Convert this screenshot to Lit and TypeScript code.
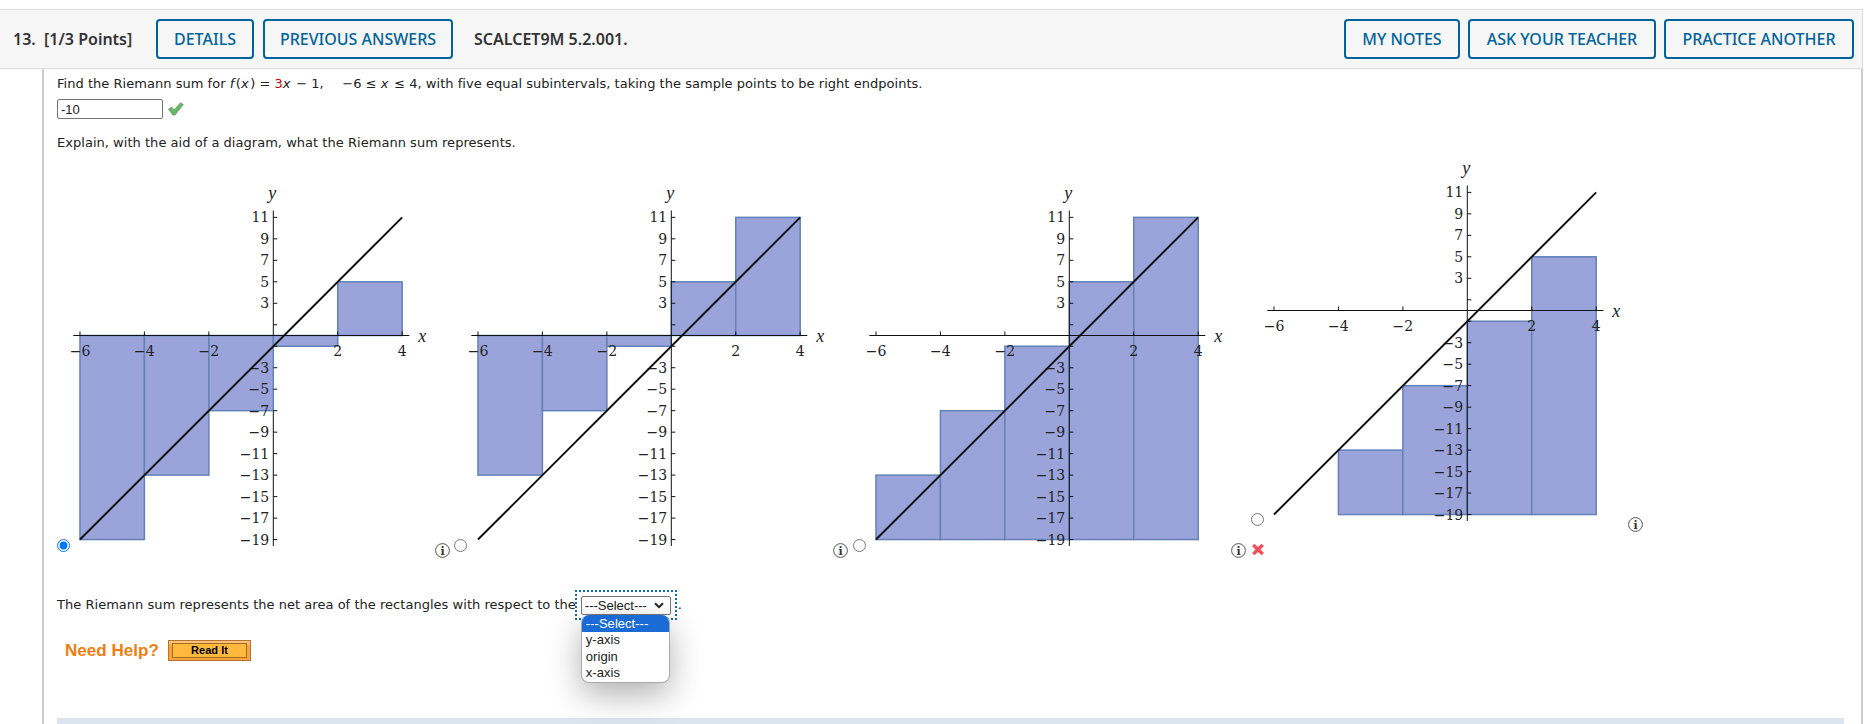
import { LitElement, css, html, svg } from "lit";
import { customElement } from "lit/decorators.js";

const X0 = 203.3;
const Y0 = 150.5;
const XU = 32.22;
const YU = 10.74;

const px = (x: number) => X0 + x * XU;
const py = (y: number) => Y0 - y * YU;

// [from x, y bottom, y top] of each rectangle, every one 2 wide
type Bar = [number, number, number];

const GRAPHS: { cls: string; bars: Bar[]; under?: boolean }[] = [
  {
    cls: "g1",
    under: true,
    bars: [
      [-6, -19, 0],
      [-4, -13, 0],
      [-2, -7, 0],
      [0, -1, 0],
      [2, 0, 5],
    ],
  },
  {
    cls: "g2",
    bars: [
      [-6, -13, 0],
      [-4, -7, 0],
      [-2, -1, 0],
      [0, 0, 5],
      [2, 0, 11],
    ],
  },
  {
    cls: "g3",
    bars: [
      [-6, -19, -13],
      [-4, -19, -7],
      [-2, -19, -1],
      [0, -19, 5],
      [2, -19, 11],
    ],
  },
  {
    cls: "g4",
    bars: [
      [-4, -19, -13],
      [-2, -19, -7],
      [0, -19, -1],
      [2, -19, 5],
    ],
  },
];

const label = (n: number) => (n < 0 ? `\u2212${-n}` : `${n}`);

@customElement("riemann-graph")
export class RiemannGraph extends LitElement {
  static override properties = { bars: { attribute: false }, under: { type: Boolean } };
  bars: Bar[] = [];
  under = false;

  static override styles = css`
    :host {
      display: block;
      width: 345px;
      height: 365px;
    }
    svg {
      display: block;
      overflow: visible;
    }
    text {
      font-family: "DejaVu Serif", serif;
      font-size: 14px;
      fill: #222;
    }
    .name {
      font-family: "Liberation Serif", serif;
      font-style: italic;
      font-size: 18px;
    }
    .bar {
      fill: #9aa3da;
      stroke: #6282b8;
      stroke-width: 1.5;
    }
    .axis {
      stroke: #111;
      stroke-width: 1;
    }
    .curve {
      stroke: #111;
      stroke-width: 2;
    }
  `;

  override render() {
    const yAxis = svg`<line class="axis" x1=${X0} x2=${X0} y1=${Y0 - 125} y2=${Y0 + 210.5}></line>`;
    const yVals = [11, 9, 7, 5, 3, 1, -1, -3, -5, -7, -9, -11, -13, -15, -17, -19];
    return html`
      <svg width="345" height="365" viewBox="0 0 345 365">
        ${this.under ? yAxis : ""}
        ${this.bars.map(
          ([x, lo, hi]) => svg`<rect class="bar" x=${px(x)} y=${py(hi)} width=${2 * XU} height=${(hi - lo) * YU}></rect>`
        )}
        ${this.under ? "" : yAxis}
        <line class="axis" x1=${X0 - 200} x2=${X0 + 136} y1=${Y0} y2=${Y0}></line>
        ${[-6, -4, -2, 2, 4].map(
          (x) => svg`
            <line class="axis" x1=${px(x)} x2=${px(x)} y1=${Y0 - 4} y2=${Y0}></line>
            <text x=${px(x)} y=${Y0 + 20} text-anchor="middle">${label(x)}</text>
          `
        )}
        ${yVals.map(
          (y) => svg`
            <line class="axis" x1=${X0} x2=${X0 + 4} y1=${py(y)} y2=${py(y)}></line>
            ${y === 1 || y === -1
              ? ""
              : svg`<text x=${X0 - 4} y=${py(y) + 5} text-anchor="end">${label(y)}</text>`}
          `
        )}
        <line class="curve" x1=${px(-6)} y1=${py(-19)} x2=${px(4)} y2=${py(11)}></line>
        <text class="name" x=${X0 + 145} y=${Y0 + 6}>x</text>
        <text class="name" x=${X0 - 5} y=${Y0 - 137}>y</text>
      </svg>
    `;
  }
}

const info = (cls: string) => html`
  <svg class="info ${cls}" width="15" height="15" viewBox="0 0 15 15">
    <circle cx="7.5" cy="7.5" r="6.9" fill="#fff" stroke="#555" stroke-width="1"></circle>
    <text x="7.5" y="11.7" text-anchor="middle" font-family="DejaVu Serif" font-weight="700" font-size="11" fill="#333">i</text>
  </svg>
`;

@customElement("app-root")
export class AppRoot extends LitElement {
  static override styles = css`
    :host {
      display: block;
      width: 1869px;
      height: 724px;
      overflow: hidden;
      box-sizing: border-box;
      padding: 9px 6px 0 0;
      background: #fff;
      color: #222;
      font-family: "DejaVu Sans", sans-serif;
      font-size: 13px;
      letter-spacing: 0.03px;
    }
    .head {
      display: flex;
      align-items: center;
      height: 58px;
      padding: 0 8px 0 13px;
      background: #f6f6f6;
      border: 1px solid #ddd;
      border-left: 0;
      font-family: "Noto Sans", sans-serif;
      font-size: 16px;
      letter-spacing: 0;
    }
    .points {
      font-weight: 600;
      width: 143px;
      white-space: pre;
      color: #333;
    }
    .btn {
      box-sizing: border-box;
      height: 40px;
      display: flex;
      align-items: center;
      justify-content: center;
      border: 2px solid #00639c;
      border-radius: 4px;
      color: #00639c;
      font-weight: 500;
    }
    .b-details {
      width: 98px;
      margin-right: 9px;
    }
    .b-prev {
      width: 190px;
      margin-right: 21px;
    }
    .b-notes {
      width: 116px;
      margin-right: 8px;
    }
    .b-ask {
      width: 188px;
      margin-right: 8px;
    }
    .b-practice {
      width: 190px;
    }
    .code {
      font-weight: 600;
      color: #333;
      flex: 1;
    }
    .body {
      box-sizing: border-box;
      height: 660px;
      margin-left: 42px;
      padding: 5px 17px 0 13px;
      border-left: 2px solid #ccc;
      border-right: 2px solid #ccc;
    }
    .line {
      line-height: 20px;
      height: 20px;
      white-space: pre;
    }
    .line i {
      font-style: italic;
      margin-right: 1.5px;
    }
    .range {
      margin-left: 6px;
    }
    .red {
      color: #c00;
    }
    .answer {
      display: flex;
      align-items: center;
      gap: 5px;
      margin-top: 5px;
    }
    .answer input {
      box-sizing: border-box;
      width: 106px;
      height: 20px;
      margin: 0;
      padding: 0 3px;
      border: 1px solid #767676;
      border-radius: 2px;
      font: 13px "Liberation Sans", sans-serif;
      color: #222;
    }
    .explain {
      margin-top: 14px;
    }
    .graphs {
      display: flex;
      align-items: flex-end;
      height: 398px;
      margin-top: 7px;
    }
    .graphs input {
      flex: none;
      width: 13px;
      height: 13px;
      margin: 0 0 6px;
    }
    riemann-graph {
      flex: none;
      margin-bottom: 8px;
    }
    .info {
      flex: none;
      display: block;
    }
    .graphs input.g2r {
      margin-left: 4px;
    }
    .graphs input.g3r {
      margin-left: 5px;
    }
    .g2 {
      margin-left: 1px;
    }
    .g4 {
      margin-bottom: 33px;
    }
    .i1 {
      margin-left: 20px;
    }
    .i2 {
      margin-left: 19.5px;
    }
    .i3 {
      margin-left: 20px;
    }
    .i4 {
      margin-left: 19.5px;
      margin-bottom: 26px;
    }
    .last {
      flex: none;
      width: 13px;
      margin-left: 5px;
      display: flex;
      flex-direction: column;
      gap: 11px;
    }
    .last svg {
      display: block;
      margin-bottom: 2px;
    }
    .sentence {
      display: flex;
      align-items: center;
      height: 30px;
      margin-top: 32px;
      white-space: nowrap;
    }
    .sentence span {
      margin-bottom: 2px;
    }
    .focus {
      position: relative;
      display: flex;
      align-items: center;
      box-sizing: border-box;
      height: 30px;
      margin: 0 1px 0 -1px;
      padding: 0 4px;
      border: 2px dotted #0a6fb5;
    }
    select {
      appearance: none;
      box-sizing: border-box;
      width: 90px;
      height: 19px;
      margin: 0;
      padding: 0 0 0 3px;
      background: #fff;
      border: 1px solid #767676;
      border-radius: 2px;
      font: 13px "Liberation Sans", sans-serif;
      color: #222;
    }
    .chev {
      position: absolute;
      left: 77.5px;
      top: 10px;
    }
    .menu {
      position: absolute;
      left: 4px;
      top: 22.5px;
      box-sizing: border-box;
      width: 89px;
      height: 68px;
      overflow: hidden;
      background: #fff;
      border: 1px solid #a8a8a8;
      border-top: 0;
      border-radius: 8px;
      box-shadow: 0 12px 32px rgba(0, 0, 0, 0.3);
      font: 13px/16.6px "Liberation Sans", sans-serif;
      z-index: 2;
    }
    .menu div {
      padding-left: 4px;
      height: 16.6px;
    }
    .menu .on {
      height: 17.5px;
      line-height: 17.5px;
      background: #1a6bd6;
      color: #fff;
    }
    .help {
      display: flex;
      align-items: center;
      height: 21px;
      margin: 20px 0 0 8px;
    }
    .need {
      width: 103px;
      font: 700 17px "Liberation Sans", sans-serif;
      color: #ef7e0e;
    }
    .read {
      box-sizing: border-box;
      width: 83px;
      height: 21px;
      padding: 2px 3px;
      border: 1px solid #b8742a;
      background: linear-gradient(#fbc98a, #f7a440 30%);
    }
    .read span {
      display: block;
      box-sizing: border-box;
      height: 15px;
      border: 1px solid #a86a1c;
      background: #ffb93d;
      color: #000;
      font: 700 11px/13px "Liberation Sans", sans-serif;
      text-align: center;
    }
    .band {
      height: 20px;
      margin-top: 57px;
      background: #dae5ef;
    }
  `;

  override render() {
    const [g1, g2, g3, g4] = GRAPHS;
    return html`
      <div class="head">
        <div class="points">13.  [1/3 Points]</div>
        <div class="btn b-details">DETAILS</div>
        <div class="btn b-prev">PREVIOUS ANSWERS</div>
        <div class="code">SCALCET9M 5.2.001.</div>
        <div class="btn b-notes">MY NOTES</div>
        <div class="btn b-ask">ASK YOUR TEACHER</div>
        <div class="btn b-practice">PRACTICE ANOTHER</div>
      </div>
      <div class="body">
        <div class="line">Find the Riemann sum for <i>f</i>(<i>x</i>) = <span class="red">3</span><i>x</i> − 1,   <span class="range">−6 ≤ <i>x</i> ≤ 4</span>, with five equal subintervals, taking the sample points to be right endpoints.</div>
        <div class="answer">
          <input type="text" value="-10" />
          <svg width="16" height="14" viewBox="0 0 16 14">
            <path d="M0.5 7.5 L3.5 5 L6 8 L12.5 0.8 L15.3 2.5 L7 13 L5 13 Z" fill="#6cb56a" stroke="#4f9a50" stroke-width="0.7"></path>
          </svg>
        </div>
        <div class="line explain">Explain, with the aid of a diagram, what the Riemann sum represents.</div>
        <div class="graphs">
          <input type="radio" checked />
          <riemann-graph class="g1" .bars=${g1.bars} ?under=${g1.under}></riemann-graph>
          ${info("i1")}
          <input class="g2r" type="radio" />
          <riemann-graph class="g2" .bars=${g2.bars}></riemann-graph>
          ${info("i2")}
          <input class="g3r" type="radio" />
          <riemann-graph class="g3" .bars=${g3.bars}></riemann-graph>
          ${info("i3")}
          <div class="last">
            <input type="radio" />
            <svg width="14" height="13" viewBox="0 0 14 13">
              <path d="M1 3 L3.5 0.7 L7 4 L10.5 0.7 L13 3 L9.5 6.5 L13 10 L10.5 12.3 L7 9 L3.5 12.3 L1 10 L4.5 6.5 Z" fill="#f0505a"></path>
            </svg>
          </div>
          <riemann-graph class="g4" .bars=${g4.bars}></riemann-graph>
          ${info("i4")}
        </div>
        <div class="sentence">
          <span>The Riemann sum represents the net area of the rectangles with respect to the</span>
          <div class="focus">
            <select><option>---Select---</option></select>
            <svg class="chev" width="10" height="7" viewBox="0 0 10 7">
              <path d="M1 1.2 L5 5.2 L9 1.2" fill="none" stroke="#222" stroke-width="2"></path>
            </svg>
            <div class="menu">
              <div class="on">---Select---</div>
              <div>y-axis</div>
              <div>origin</div>
              <div>x-axis</div>
            </div>
          </div>
          <span>.</span>
        </div>
        <div class="help">
          <div class="need">Need Help?</div>
          <div class="read"><span>Read It</span></div>
        </div>
        <div class="band"></div>
      </div>
    `;
  }
}
